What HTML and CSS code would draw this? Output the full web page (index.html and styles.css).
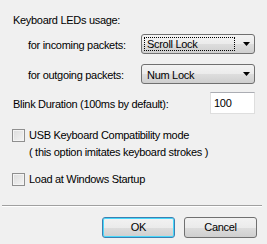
FILE: index.html
```html
<!DOCTYPE html>
<html>
<head>
<meta charset="utf-8">
<link rel="stylesheet" href="styles.css">
</head>
<body>
<div class="dialog">
  <div class="title">Keyboard LEDs usage:</div>
  <div class="row combo-row first">
    <span class="sublabel">for incoming packets:</span>
    <div class="combo">
      <span class="combo-text focused">Scroll Lock</span>
      <svg class="arrow" width="7" height="4" viewBox="0 0 7 4"><path d="M0 0H7L3.5 4Z" fill="#000"/></svg>
    </div>
  </div>
  <div class="row combo-row second">
    <span class="sublabel">for outgoing packets:</span>
    <div class="combo">
      <span class="combo-text">Num Lock</span>
      <svg class="arrow" width="7" height="4" viewBox="0 0 7 4"><path d="M0 0H7L3.5 4Z" fill="#000"/></svg>
    </div>
  </div>
  <div class="row blink-row">
    <span class="label">Blink Duration (100ms by default):</span>
    <div class="input">100</div>
  </div>
  <div class="check-row usb">
    <span class="checkbox"></span>
    <span class="check-label">USB Keyboard Compatibility mode</span>
  </div>
  <div class="note">( this option imitates keyboard strokes )</div>
  <div class="check-row load">
    <span class="checkbox"></span>
    <span class="check-label">Load at Windows Startup</span>
  </div>
  <div class="separator"></div>
  <div class="buttons">
    <div class="button default">OK</div>
    <div class="button">Cancel</div>
  </div>
</div>
</body>
</html>
```
FILE: styles.css
```css
html, body {
  margin: 0;
  padding: 0;
  background: #f0f0f0;
}
body {
  width: 267px;
  height: 244px;
  overflow: hidden;
  font-family: "Liberation Sans", Arial, sans-serif;
  font-size: 11px;
  letter-spacing: -0.3px;
  white-space: nowrap;
  color: #000;
}
.dialog {
  display: flex;
  flex-direction: column;
  padding-top: 14px;
}
.title {
  line-height: 13px;
  margin-left: 13px;
}
.row {
  display: flex;
  align-items: center;
  justify-content: space-between;
  padding-left: 28px;
  padding-right: 12px;
}
.combo-row.first {
  margin-top: 7px;
}
.combo-row.second {
  margin-top: 10px;
}
.sublabel {
  line-height: 13px;
  padding-top: 2px;
}
.combo {
  width: 114px;
  height: 20px;
  box-sizing: border-box;
  border: 1px solid #707070;
  border-radius: 3px;
  background: linear-gradient(#f3f3f3 0%, #ebebeb 50%, #dddddd 51%, #cfcfcf 100%);
  display: flex;
  align-items: center;
  padding: 0 4px 0 2px;
}
.combo-text {
  flex: 1;
  height: 14px;
  line-height: 14px;
  padding-left: 2px;
  box-sizing: border-box;
  border: 1px dotted transparent;
  margin-right: 8px;
}
.combo-text.focused {
  border-color: #000;
  line-height: 12px;
}
.arrow {
  display: block;
}
.blink-row {
  margin-top: 8px;
  padding-left: 13px;
}
.label {
  line-height: 13px;
  padding-top: 3px;
}
.input {
  width: 45px;
  height: 22px;
  box-sizing: border-box;
  background: #fff;
  border: 1px solid #dedede;
  border-top-color: #abadb3;
  line-height: 20px;
  padding-left: 3px;
}
.check-row {
  display: flex;
  align-items: center;
  padding-left: 12px;
  gap: 4px;
  height: 14px;
}
.check-row.usb {
  margin-top: 14px;
}
.check-row.load {
  margin-top: 13px;
}
.checkbox {
  width: 13px;
  height: 13px;
  box-sizing: border-box;
  border: 1px solid #8f8f8f;
  background: linear-gradient(135deg, #dcdcdc 0%, #f4f4f4 100%);
  box-shadow: inset 0 0 0 1px #f4f4f4;
}
.check-label {
  line-height: 13px;
}
.note {
  margin-left: 29px;
  margin-top: 4px;
  line-height: 13px;
}
.separator {
  margin: 19px 5px 0 2px;
  height: 0;
  border-top: 1px solid #a0a0a0;
  border-bottom: 1px solid #ffffff;
}
.buttons {
  display: flex;
  justify-content: flex-end;
  gap: 9px;
  margin-top: 10px;
  padding-right: 10px;
}
.button {
  width: 73px;
  height: 21px;
  box-sizing: border-box;
  border: 1px solid #707070;
  border-radius: 3px;
  background: linear-gradient(#f2f2f2 0%, #ebebeb 50%, #dddddd 51%, #cfcfcf 100%);
  text-align: center;
  line-height: 19px;
}
.button.default {
  border-color: #3c7fb1;
  box-shadow: inset 0 0 0 1px #48d8fb;
}
```
